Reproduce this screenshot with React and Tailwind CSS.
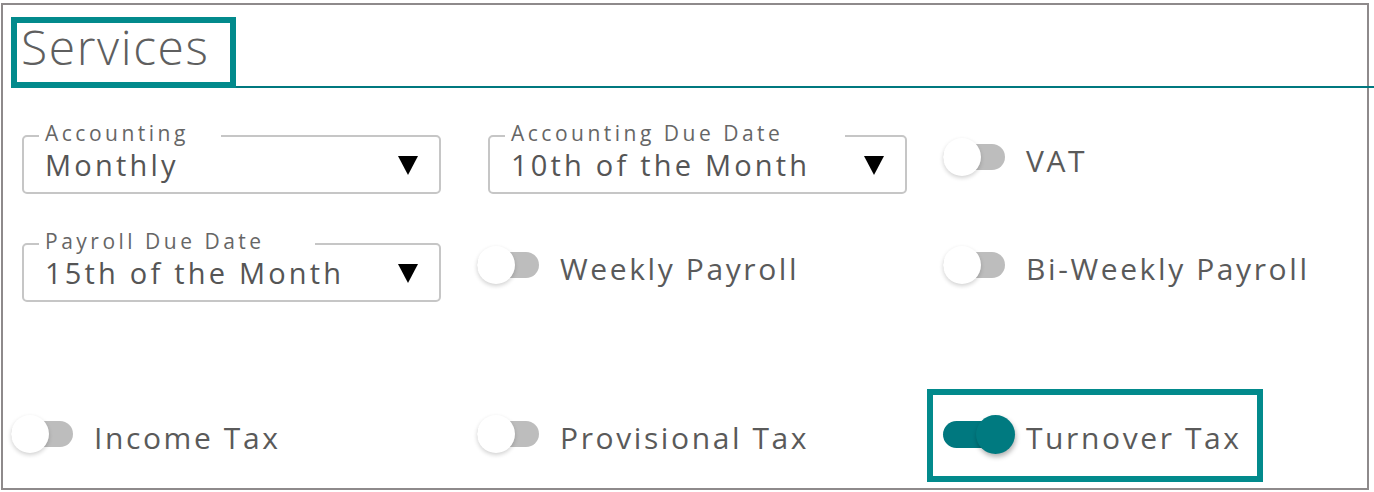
import React from "react";

const font = { fontFamily: '"Open Sans", "Noto Sans", sans-serif' };

function Arrow() {
  return (
    <svg width="20" height="20" viewBox="0 0 20 20" className="shrink-0">
      <polygon points="0,1 20,1 10,20" fill="#000" />
    </svg>
  );
}

function SelectBox({ label, value, notchPad }) {
  return (
    <div className="relative h-[59px] w-[419px] rounded-[5px] border-2 border-[#c6c6c6] flex items-center justify-between pl-[21px] pr-[21px]">
      <span
        className={`absolute -top-[14px] left-[15px] h-[21px] bg-white pl-[6px] text-[21px] leading-none tracking-[3.5px] text-[#666666] whitespace-nowrap ${notchPad}`}
      >
        {label}
      </span>
      <span className="text-[29px] leading-none tracking-[3.2px] text-[#555555] whitespace-nowrap">
        {value}
      </span>
      <Arrow />
    </div>
  );
}

function Toggle({ label, on }) {
  return (
    <div className="flex items-start -ml-[11px] mt-[3px]">
      <div className="relative h-[38px] w-[62px] shrink-0 flex items-center">
        <div
          className={
            on
              ? "h-[27px] w-[62px] rounded-full bg-[#00787f]"
              : "h-[26px] w-[62px] rounded-full bg-[#bdbdbd]"
          }
        />
        {on ? (
          <div className="absolute -right-[10px] top-0 h-[39px] w-[39px] rounded-full bg-[#007a80] shadow-[1px_3px_5px_rgba(0,0,0,0.3)]" />
        ) : (
          <div className="absolute left-0 top-0 h-[38px] w-[38px] rounded-full bg-white shadow-[0px_2px_4px_rgba(0,0,0,0.18)]" />
        )}
      </div>
      <span className="ml-[21px] mt-[8px] text-[30px] leading-none tracking-[2.6px] text-[#5a5a5a] whitespace-nowrap">
        {label}
      </span>
    </div>
  );
}

export default function App() {
  return (
    <div className="w-[1374px] h-[492px] bg-white overflow-hidden pt-[3px] pl-[1px]" style={font}>
      <div className="w-[1368px] h-[487px] border-2 border-[#8e8a8b]">
        {/* header */}
        <div className="flex items-end mt-[12px] ml-[8px] -mr-[7px]">
          <div className="h-[71px] w-[225px] border-[6px] border-[#028a8c] pl-[4px]">
            <div className="text-[48px] font-light leading-none tracking-[1.6px] text-[#5f5f5f]">
              Services
            </div>
          </div>
          <div className="flex-1 border-b-2 border-[#00787f]" />
        </div>

        {/* content */}
        <div className="pl-[19px] mt-[47px]">
          <div className="grid grid-cols-[419px_419px_1fr] gap-x-[47px]">
            <SelectBox label="Accounting" value="Monthly" notchPad="pr-[32px]" />
            <SelectBox label="Accounting Due Date" value="10th of the Month" notchPad="pr-[62px]" />
            <Toggle label="VAT" />
          </div>
          <div className="grid grid-cols-[419px_419px_1fr] gap-x-[47px] mt-[49px]">
            <SelectBox label="Payroll Due Date" value="15th of the Month" notchPad="pr-[50px]" />
            <Toggle label="Weekly Payroll" />
            <Toggle label="Bi-Weekly Payroll" />
          </div>
          <div className="grid grid-cols-[419px_419px_1fr] gap-x-[47px] mt-[110px]">
            <Toggle label="Income Tax" />
            <Toggle label="Provisional Tax" />
            <div className="relative">
              <Toggle label="Turnover Tax" on />
              <div className="pointer-events-none absolute -left-[27px] -top-[23px] h-[93px] w-[336px] border-[6px] border-[#028a8c]" />
            </div>
          </div>
        </div>
      </div>
    </div>
  );
}
